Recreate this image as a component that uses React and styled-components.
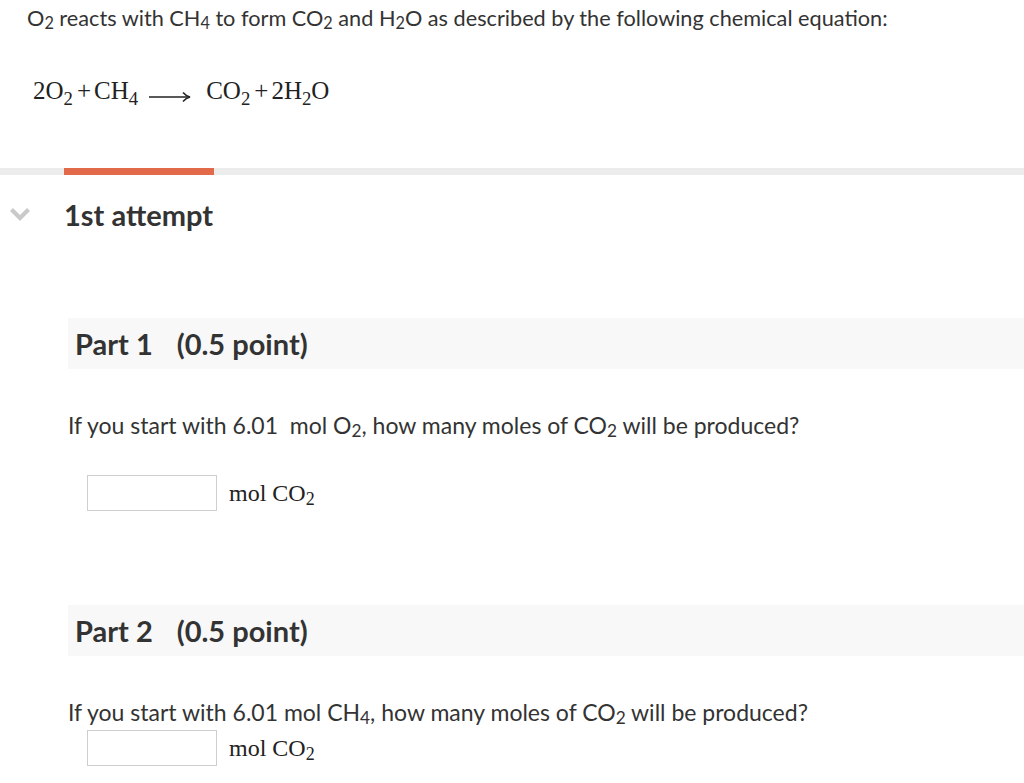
import React from 'react';
import styled, { createGlobalStyle } from 'styled-components';

const GlobalStyle = createGlobalStyle`
    body {
        margin: 0;
        background: #fff;
        font-family: Lato, "Open Sans", sans-serif;
        color: #333;
    }
`;

const parts = [
    { no: 1, before: 'If you start with 6.01 \u00a0mol O', sub: '2', top: 84, answerGap: 34 },
    { no: 2, before: 'If you start with 6.01 mol CH', sub: '4', top: 94, answerGap: 2 },
];

function App() {
    return (
        <Page>
            <GlobalStyle />
            <Intro>
                O<Sub>2</Sub> reacts with CH<Sub>4</Sub> to form CO<Sub>2</Sub> and H<Sub>2</Sub>O as described by the following chemical equation:
            </Intro>
            <Equation>
                2O<MathSub>2</MathSub>
                <Plus>+</Plus>CH<MathSub>4</MathSub>
                <Arrow width="44" height="14" viewBox="0 0 44 14">
                    <line x1="1" y1="7" x2="40" y2="7" stroke="#222" strokeWidth="1.3" />
                    <path d="M35 2.5 Q38 6 42 7 Q38 8 35 11.5" fill="none" stroke="#222" strokeWidth="1.6" />
                </Arrow>
                CO<MathSub>2</MathSub>
                <Plus>+</Plus>2H<MathSub>2</MathSub>O
            </Equation>

            <ProgressTrack>
                <ProgressFill />
            </ProgressTrack>

            <AttemptHeader>
                <Chevron width="22" height="14" viewBox="0 0 22 14">
                    <path d="M2.5 2.5 L11 11 L19.5 2.5" fill="none" stroke="#c9c9c9" strokeWidth="4.2" />
                </Chevron>
                <AttemptTitle>1st attempt</AttemptTitle>
            </AttemptHeader>

            {parts.map((p) => (
                <Part key={p.no} $top={p.top}>
                    <PartHeader>
                        <span>Part {p.no}</span>
                        <span>(0.5 point)</span>
                    </PartHeader>
                    <Question>
                        {p.before}<Sub>{p.sub}</Sub>, how many moles of CO<Sub>2</Sub> will be produced?
                    </Question>
                    <AnswerRow $gap={p.answerGap}>
                        <AnswerInput type="text" />
                        <Unit>mol CO<UnitSub>2</UnitSub></Unit>
                    </AnswerRow>
                </Part>
            ))}
        </Page>
    );
}

export default App;

const Page = styled.div`
    width: 1024px;
    min-height: 783px;
    overflow: hidden;
`;

const Intro = styled.p`
    margin: 0;
    padding: 3px 0 0 27px;
    font-size: 21.7px;
    line-height: 30px;
    color: #333;
    white-space: nowrap;
`;

const Sub = styled.sub`
    font-size: 0.75em;
    vertical-align: -0.2em;
    line-height: 0;
`;

const Equation = styled.div`
    display: flex;
    align-items: baseline;
    margin: 44px 0 0 33px;
    height: 34px;
    font-family: "Liberation Serif", "DejaVu Serif", serif;
    font-size: 25px;
    color: #222;
`;

const MathSub = styled.span`
    font-size: 0.75em;
    position: relative;
    top: 0.3em;
`;

const Plus = styled.span`
    margin: 0 3px 0 4px;
`;

const Arrow = styled.svg`
    align-self: center;
    margin: 0 14px 0 10px;
    position: relative;
    top: 3px;
`;

const ProgressTrack = styled.div`
    margin-top: 57px;
    height: 7px;
    background: #ececec;
    padding-left: 64px;
`;

const ProgressFill = styled.div`
    width: 150px;
    height: 100%;
    background: #e26a4b;
`;

const AttemptHeader = styled.div`
    display: flex;
    align-items: center;
    height: 40px;
    margin-top: 19px;
`;

const Chevron = styled.svg`
    margin-left: 9px;
    width: 22px;
    flex-shrink: 0;
`;

const AttemptTitle = styled.h2`
    margin: 0 0 0 33px;
    font-size: 29px;
    font-weight: 700;
    color: #333;
`;

const Part = styled.section`
    margin-left: 68px;
    margin-top: ${(p) => p.$top}px;
`;

const PartHeader = styled.div`
    display: flex;
    align-items: center;
    gap: 24px;
    height: 51px;
    padding-left: 7px;
    background: #f8f8f8;
    font-size: 29px;
    font-weight: 700;
    color: #333;
`;

const Question = styled.p`
    margin: 40px 0 0 0;
    font-size: 23px;
    line-height: 32px;
    color: #333;
`;

const AnswerRow = styled.div`
    display: flex;
    align-items: center;
    gap: 12px;
    margin: ${(p) => p.$gap}px 0 0 19px;
`;

const AnswerInput = styled.input`
    box-sizing: border-box;
    width: 130px;
    height: 36px;
    margin: 0;
    border: 1px solid #cfcfcf;
    background: #fff;
    outline: none;
`;

const Unit = styled.span`
    font-family: "Liberation Serif", "DejaVu Serif", serif;
    font-size: 24px;
    color: #222;
`;

const UnitSub = styled.span`
    font-size: 0.75em;
    position: relative;
    top: 0.25em;
`;
